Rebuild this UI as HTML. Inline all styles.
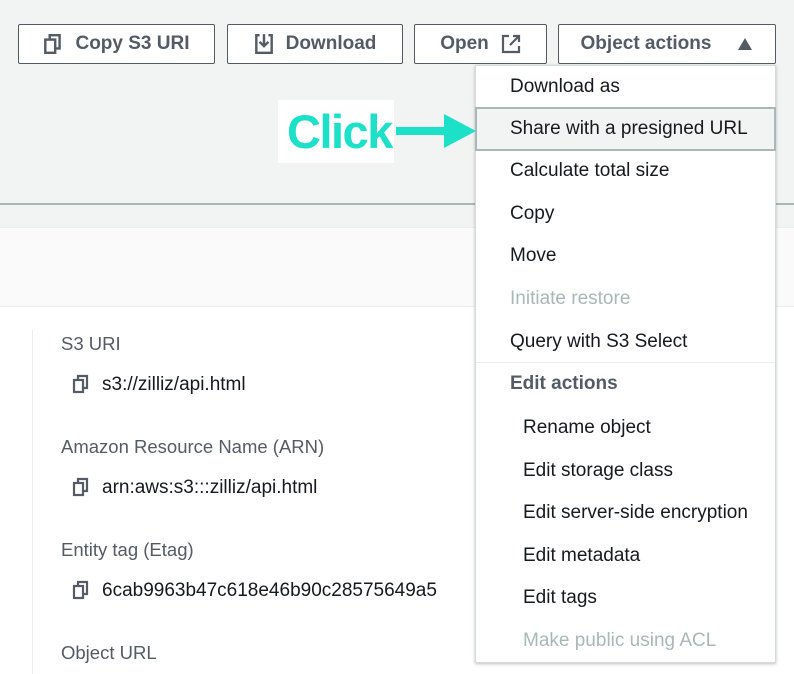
<!DOCTYPE html>
<html><head><style>
*{margin:0;padding:0;box-sizing:border-box}
body{width:794px;height:674px;overflow:hidden;position:relative;background:#fff;font-family:"Liberation Sans",sans-serif;color:#16191f}
.a{position:absolute}
.btn{position:absolute;top:24px;height:40px;border:1.5px solid #545b64;background:#fff;border-radius:2px;font-weight:bold;font-size:19px;color:#545b64;display:flex;align-items:center;justify-content:center;gap:12px}
.mi{position:absolute;left:510px;font-size:19px;line-height:20px}
.sub{left:523px}
.dis{color:#aab7b8}
.lab{position:absolute;left:61px;font-size:18.5px;color:#545b64}
.val{position:absolute;left:102px;font-size:19px}
.ic{position:absolute;left:72px}
</style></head><body>
<div class="a" style="left:0;top:0;width:794px;height:203px;background:#f2f3f3"></div>
<div class="a" style="left:0;top:203px;width:794px;height:2px;background:#aab7b8"></div>
<div class="a" style="left:0;top:205px;width:794px;height:22px;background:#f2f3f3"></div>
<div class="a" style="left:0;top:227px;width:794px;height:80px;background:#fafafa;border-top:1px solid #eaeded;border-bottom:1px solid #eaeded"></div>
<div class="a" style="left:32px;top:330px;width:1px;height:344px;background:#eaeded"></div>

<div class="btn" style="left:18px;width:197px"><svg width="20" height="22" viewBox="0 0 18 20"><rect x="2" y="6" width="9" height="12" fill="none" stroke="#545b64" stroke-width="2.2"/><path d="M6 6V2h9v12h-4" fill="none" stroke="#545b64" stroke-width="2.2"/></svg>Copy S3 URI</div>
<div class="btn" style="left:227px;width:176px"><svg width="20" height="22" viewBox="0 0 18 20"><path d="M5 2H2v16h14V2h-3" fill="none" stroke="#545b64" stroke-width="2.2"/><path d="M9 1v11M5 8l4 4 4-4" fill="none" stroke="#545b64" stroke-width="2.2"/></svg>Download</div>
<div class="btn" style="left:414px;width:133px">Open <svg width="20" height="20" viewBox="0 0 20 20"><path d="M8 2H2v16h16v-6" fill="none" stroke="#545b64" stroke-width="2.2"/><path d="M12 2h6v6M18 2l-9 9" fill="none" stroke="#545b64" stroke-width="2.2"/></svg></div>
<div class="btn" style="left:558px;width:218px">Object actions <svg width="16" height="14" viewBox="0 0 16 14" style="margin-left:14px"><path d="M8 1L15 13H1z" fill="#545b64"/></svg></div>

<div class="a" style="left:475px;top:65px;width:301px;height:598px;background:#fff;border:1px solid #d5dbdb;box-shadow:0 1px 3px rgba(0,0,0,.25)"></div>
<div class="a" style="left:475px;top:107px;width:301px;height:44px;background:#f2f3f3;border:2px solid #aab7b8"></div>
<div class="a" style="left:476px;top:362px;width:299px;height:1px;background:#eaeded"></div>
<div class="mi" style="top:77px">Download as</div>
<div class="mi" style="top:119px">Share with a presigned URL</div>
<div class="mi" style="top:161px">Calculate total size</div>
<div class="mi" style="top:204px">Copy</div>
<div class="mi" style="top:246px">Move</div>
<div class="mi dis" style="top:289px">Initiate restore</div>
<div class="mi" style="top:332px">Query with S3 Select</div>
<div class="mi" style="top:374px;font-weight:bold;color:#545b64">Edit actions</div>
<div class="mi sub" style="top:418px">Rename object</div>
<div class="mi sub" style="top:461px">Edit storage class</div>
<div class="mi sub" style="top:503px">Edit server-side encryption</div>
<div class="mi sub" style="top:546px">Edit metadata</div>
<div class="mi sub" style="top:588px">Edit tags</div>
<div class="mi sub dis" style="top:631px">Make public using ACL</div>

<div class="a" style="left:278px;top:100px;width:116px;height:63px;background:#fff"></div>
<div class="a" style="left:287px;top:104px;font-size:47px;font-weight:bold;color:#1de0c8;letter-spacing:-1.5px">Click</div>
<svg class="a" style="left:396px;top:112px" width="80" height="38" viewBox="0 0 80 38"><rect x="0" y="15" width="50" height="8" fill="#1de0c8"/><path d="M48 2L80 19 48 36z" fill="#1de0c8"/></svg>

<div class="lab" style="top:333px">S3 URI</div>
<svg class="ic" style="top:374px" width="18" height="20" viewBox="0 0 18 20"><rect x="2" y="6" width="9" height="12" fill="none" stroke="#545b64" stroke-width="2.2"/><path d="M6 6V2h9v12h-4" fill="none" stroke="#545b64" stroke-width="2.2"/></svg>
<div class="val" style="top:374px">s3://zilliz/api.html</div>
<div class="lab" style="top:436px">Amazon Resource Name (ARN)</div>
<svg class="ic" style="top:477px" width="18" height="20" viewBox="0 0 18 20"><rect x="2" y="6" width="9" height="12" fill="none" stroke="#545b64" stroke-width="2.2"/><path d="M6 6V2h9v12h-4" fill="none" stroke="#545b64" stroke-width="2.2"/></svg>
<div class="val" style="top:477px">arn:aws:s3:::zilliz/api.html</div>
<div class="lab" style="top:539px">Entity tag (Etag)</div>
<svg class="ic" style="top:580px" width="18" height="20" viewBox="0 0 18 20"><rect x="2" y="6" width="9" height="12" fill="none" stroke="#545b64" stroke-width="2.2"/><path d="M6 6V2h9v12h-4" fill="none" stroke="#545b64" stroke-width="2.2"/></svg>
<div class="val" style="top:580px">6cab9963b47c618e46b90c28575649a5</div>
<div class="lab" style="top:642px">Object URL</div>
</body></html>
